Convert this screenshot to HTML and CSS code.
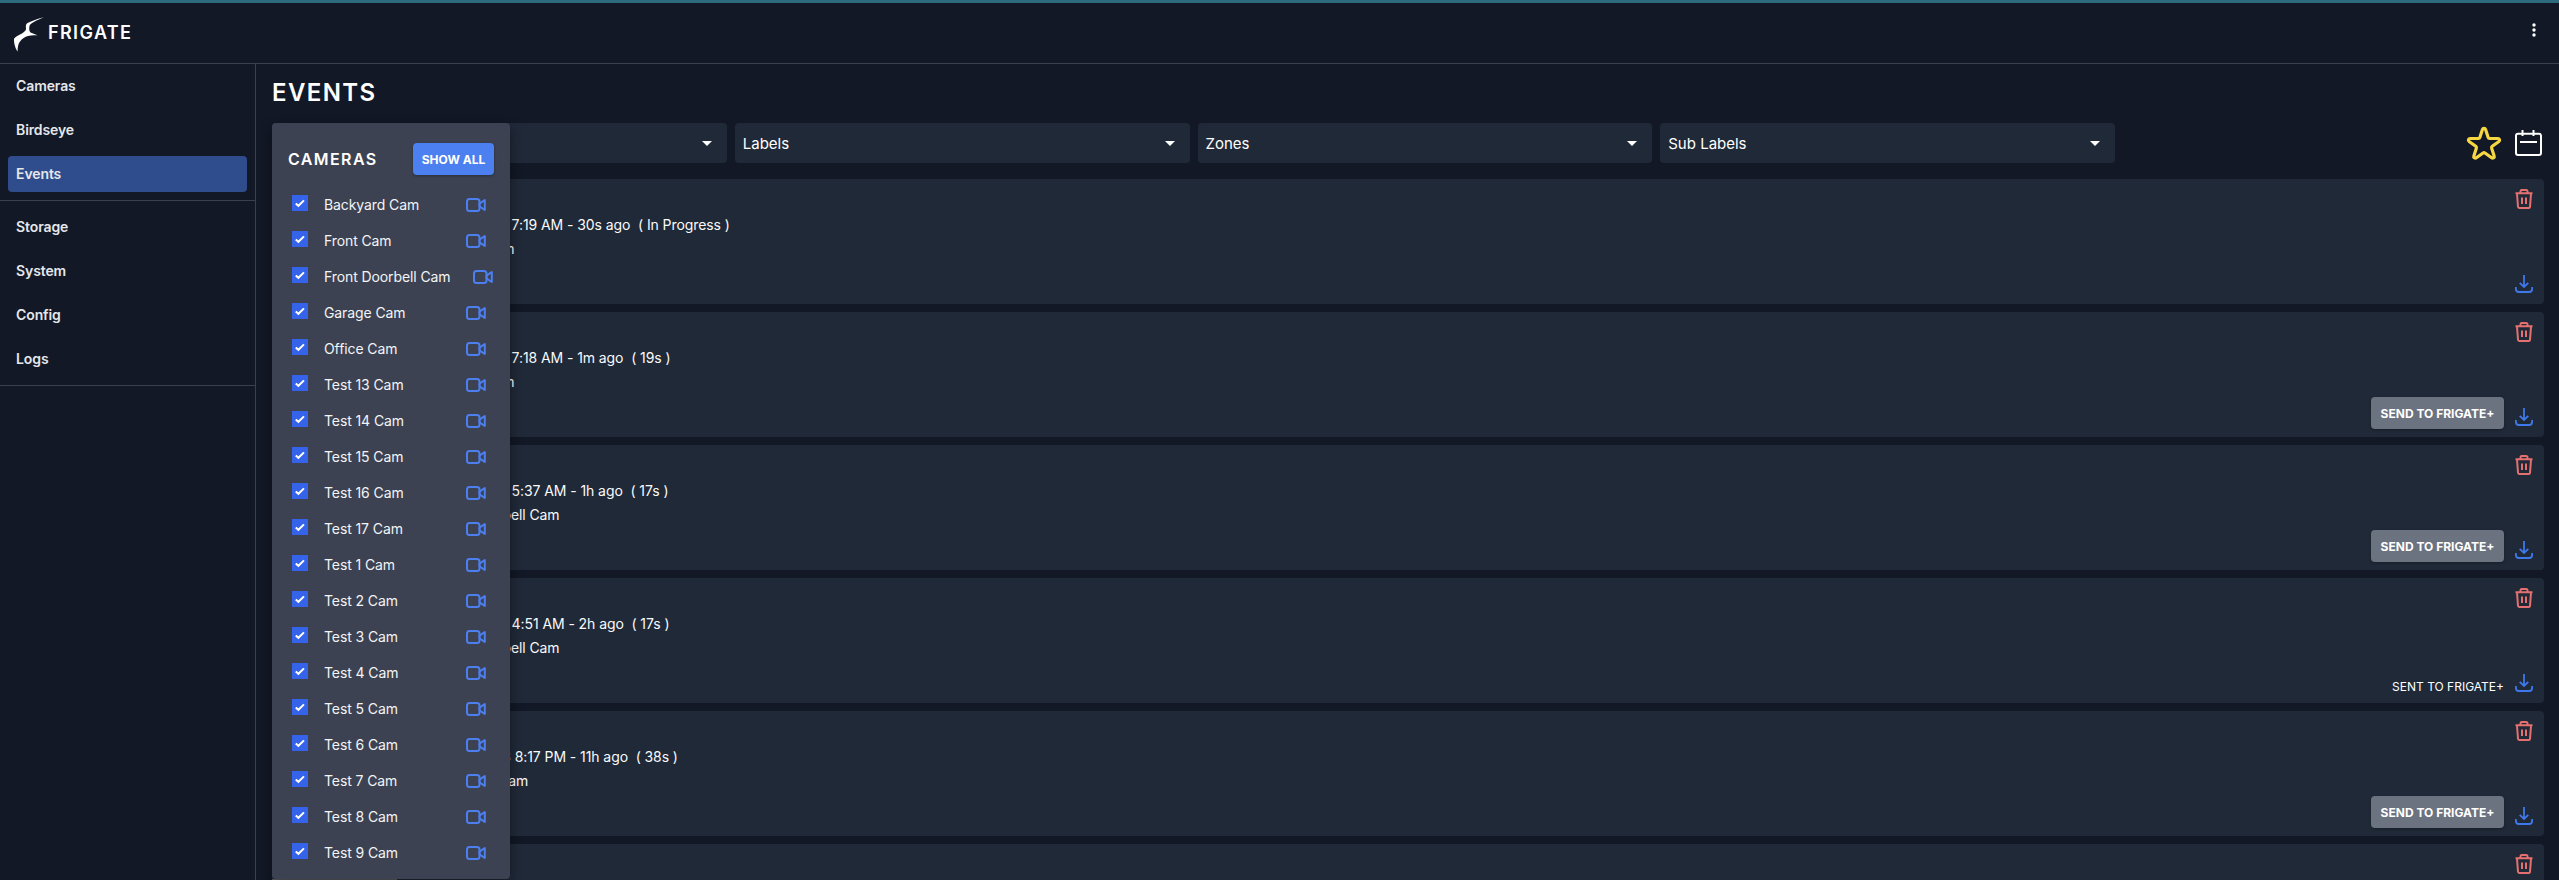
FILE: index.html
```html
<!DOCTYPE html>
<html lang="en">
<head>
<meta charset="utf-8">
<title>Frigate - Events</title>
<link rel="stylesheet" href="styles.css">
</head>
<body>
<svg class="sprite" width="0" height="0" aria-hidden="true">
  <symbol id="i-video" viewBox="0 0 20 14"><rect x="1" y="1" width="12.5" height="12" rx="2.5" fill="none" stroke="currentColor" stroke-width="2"/><path d="M13.5 5.6 18.8 2v10l-5.3-3.6z" fill="none" stroke="currentColor" stroke-width="2" stroke-linejoin="round"/></symbol>
  <symbol id="i-check" viewBox="0 0 16 16"><path d="M3.8 8.4 6.4 10.8 12 5.4" fill="none" stroke="#fff" stroke-width="2"/></symbol>
  <symbol id="i-trash" viewBox="0 0 18 20"><path d="M.5 4.2h17M5.5 4V2.2A1.2 1.2 0 0 1 6.7 1h4.6a1.2 1.2 0 0 1 1.2 1.2V4M2 4.5l1 13.3A1.3 1.3 0 0 0 4.3 19h9.400a1.300 1.300 0 0 0 1.300-1.200l1-13.300M7 8.500v6.500M11 8.500v6.500" fill="none" stroke="currentColor" stroke-width="2"/></symbol>
  <symbol id="i-download" viewBox="0 0 18 18"><path d="M9 0v12M4.700 7.800 9 12l4.300-4.200M.9 12v2a3 3 0 0 0 3 3h10.200a3 3 0 0 0 3-3v-2" fill="none" stroke="currentColor" stroke-width="1.800"/></symbol>
</svg>

<div class="app">
  <header class="topbar">
    <div class="brand">
      <svg class="logo" viewBox="12 13 34 38" aria-hidden="true"><path d="M43.800 15.200C37 17 32 18.600 27.500 21 25.600 22 25.800 24.500 26 26c.3 2-1 3.500-4 5.500-3.500 2-6.500 3-8 5.300-.3 3.200 1 9.200 3.500 12.700.3-4.500.5-7.500 2.500-10 2-3 5-4.500 8-5.500 3-.7 6-1 9.500-.5-2.500-1.500-5.500-2.200-7-3-1.500-1.500-1.500-4.500-1-6.500.5-2.500 6.500-5.500 14.300-8.800z" fill="#fff"/></svg>
      <span class="brand-name">Frigate</span>
    </div>
    <button class="more" aria-label="More">
      <svg viewBox="0 0 6 18" width="6" height="18" aria-hidden="true"><circle cx="3" cy="3" r="1.700" fill="#fff"/><circle cx="3" cy="8" r="1.700" fill="#fff"/><circle cx="3" cy="13" r="1.700" fill="#fff"/></svg>
    </button>
  </header>

  <div class="shell">
    <nav class="sidebar">
      <a class="nav-item">Cameras</a>
      <a class="nav-item">Birdseye</a>
      <a class="nav-item active">Events</a>
      <hr class="nav-sep">
      <a class="nav-item">Storage</a>
      <a class="nav-item">System</a>
      <a class="nav-item">Config</a>
      <a class="nav-item">Logs</a>
      <hr class="nav-sep">
    </nav>

    <main class="main">
      <h1 class="page-title">Events</h1>

      <div class="filters">
        <div class="filter-grid">
          <div class="select"><span>Cameras</span><i class="caret"></i></div>
          <div class="select"><span>Labels</span><i class="caret"></i></div>
          <div class="select"><span>Zones</span><i class="caret"></i></div>
          <div class="select"><span>Sub Labels</span><i class="caret"></i></div>
        </div>
        <div class="filter-icons">
          <svg class="star" viewBox="0 0 24 24" aria-hidden="true"><path d="M11.050 3.900c.3-.9 1.600-.9 1.900 0l1.500 4.700a1 1 0 0 0 .95.7h4.950c1 0 1.400 1.300.6 1.800l-4 2.900a1 1 0 0 0-.36 1.100l1.500 4.700c.3.900-.75 1.700-1.500 1.100l-4-2.900a1 1 0 0 0-1.180 0l-4 2.900c-.75.600-1.800-.2-1.500-1.100l1.500-4.700a1 1 0 0 0-.36-1.100l-4-2.900c-.8-.5-.4-1.800.6-1.800h4.950a1 1 0 0 0 .95-.7z" fill="none" stroke="#f5d742" stroke-width="1.900" stroke-linejoin="round"/></svg>
          <svg class="calendar" viewBox="0 0 27 26" aria-hidden="true"><rect x="1" y="3.800" width="25" height="21.200" rx="2" fill="none" stroke="#fff" stroke-width="2"/><path d="M7.500 0v6M18.500 0v6M5 12h17" fill="none" stroke="#fff" stroke-width="2"/></svg>
        </div>
      </div>

      <div class="events">
        <article class="card">
          <div class="thumb"></div>
          <div class="info">
            <div class="label">Person</div>
            <div class="line time">03/11/2023 7:19 AM - 30s ago &nbsp;( In Progress )</div>
            <div class="line">Garage Cam</div>
          </div>
          <div class="actions">
            <svg class="trash"><use href="#i-trash"/></svg>
            <div class="action-row"><svg class="download"><use href="#i-download"/></svg></div>
          </div>
        </article>
        <article class="card">
          <div class="thumb"></div>
          <div class="info">
            <div class="label">Person</div>
            <div class="line time">03/11/2023 7:18 AM - 1m ago &nbsp;( 19s )</div>
            <div class="line">Garage Cam</div>
          </div>
          <div class="actions">
            <svg class="trash"><use href="#i-trash"/></svg>
            <div class="action-row"><button class="send">Send to Frigate+</button><svg class="download"><use href="#i-download"/></svg></div>
          </div>
        </article>
        <article class="card">
          <div class="thumb"></div>
          <div class="info">
            <div class="label">Person</div>
            <div class="line time">03/11/2023 5:37 AM - 1h ago &nbsp;( 17s )</div>
            <div class="line">Front Doorbell Cam</div>
          </div>
          <div class="actions">
            <svg class="trash"><use href="#i-trash"/></svg>
            <div class="action-row"><button class="send">Send to Frigate+</button><svg class="download"><use href="#i-download"/></svg></div>
          </div>
        </article>
        <article class="card">
          <div class="thumb"></div>
          <div class="info">
            <div class="label">Person</div>
            <div class="line time">03/11/2023 4:51 AM - 2h ago &nbsp;( 17s )</div>
            <div class="line">Front Doorbell Cam</div>
          </div>
          <div class="actions">
            <svg class="trash"><use href="#i-trash"/></svg>
            <div class="action-row"><span class="sent">Sent to Frigate+</span><svg class="download"><use href="#i-download"/></svg></div>
          </div>
        </article>
        <article class="card">
          <div class="thumb"></div>
          <div class="info">
            <div class="label">Person</div>
            <div class="line time">03/10/2023 8:17 PM - 11h ago &nbsp;( 38s )</div>
            <div class="line">Backyard Cam</div>
          </div>
          <div class="actions">
            <svg class="trash"><use href="#i-trash"/></svg>
            <div class="action-row"><button class="send">Send to Frigate+</button><svg class="download"><use href="#i-download"/></svg></div>
          </div>
        </article>
        <article class="card">
          <div class="thumb"></div>
          <div class="info">
            <div class="label">Person</div>
          </div>
          <div class="actions">
            <svg class="trash"><use href="#i-trash"/></svg>
          </div>
        </article>
      </div>

      <section class="popover">
        <div class="popover-head">
          <h2 class="popover-title">Cameras</h2>
          <button class="show-all">Show All</button>
        </div>
        <ul class="cam-list">
          <li class="cam"><span class="check"><svg><use href="#i-check"/></svg></span><span class="cam-name">Backyard Cam</span><svg class="video"><use href="#i-video"/></svg></li>
          <li class="cam"><span class="check"><svg><use href="#i-check"/></svg></span><span class="cam-name">Front Cam</span><svg class="video"><use href="#i-video"/></svg></li>
          <li class="cam"><span class="check"><svg><use href="#i-check"/></svg></span><span class="cam-name">Front Doorbell Cam</span><svg class="video"><use href="#i-video"/></svg></li>
          <li class="cam"><span class="check"><svg><use href="#i-check"/></svg></span><span class="cam-name">Garage Cam</span><svg class="video"><use href="#i-video"/></svg></li>
          <li class="cam"><span class="check"><svg><use href="#i-check"/></svg></span><span class="cam-name">Office Cam</span><svg class="video"><use href="#i-video"/></svg></li>
          <li class="cam"><span class="check"><svg><use href="#i-check"/></svg></span><span class="cam-name">Test 13 Cam</span><svg class="video"><use href="#i-video"/></svg></li>
          <li class="cam"><span class="check"><svg><use href="#i-check"/></svg></span><span class="cam-name">Test 14 Cam</span><svg class="video"><use href="#i-video"/></svg></li>
          <li class="cam"><span class="check"><svg><use href="#i-check"/></svg></span><span class="cam-name">Test 15 Cam</span><svg class="video"><use href="#i-video"/></svg></li>
          <li class="cam"><span class="check"><svg><use href="#i-check"/></svg></span><span class="cam-name">Test 16 Cam</span><svg class="video"><use href="#i-video"/></svg></li>
          <li class="cam"><span class="check"><svg><use href="#i-check"/></svg></span><span class="cam-name">Test 17 Cam</span><svg class="video"><use href="#i-video"/></svg></li>
          <li class="cam"><span class="check"><svg><use href="#i-check"/></svg></span><span class="cam-name">Test 1 Cam</span><svg class="video"><use href="#i-video"/></svg></li>
          <li class="cam"><span class="check"><svg><use href="#i-check"/></svg></span><span class="cam-name">Test 2 Cam</span><svg class="video"><use href="#i-video"/></svg></li>
          <li class="cam"><span class="check"><svg><use href="#i-check"/></svg></span><span class="cam-name">Test 3 Cam</span><svg class="video"><use href="#i-video"/></svg></li>
          <li class="cam"><span class="check"><svg><use href="#i-check"/></svg></span><span class="cam-name">Test 4 Cam</span><svg class="video"><use href="#i-video"/></svg></li>
          <li class="cam"><span class="check"><svg><use href="#i-check"/></svg></span><span class="cam-name">Test 5 Cam</span><svg class="video"><use href="#i-video"/></svg></li>
          <li class="cam"><span class="check"><svg><use href="#i-check"/></svg></span><span class="cam-name">Test 6 Cam</span><svg class="video"><use href="#i-video"/></svg></li>
          <li class="cam"><span class="check"><svg><use href="#i-check"/></svg></span><span class="cam-name">Test 7 Cam</span><svg class="video"><use href="#i-video"/></svg></li>
          <li class="cam"><span class="check"><svg><use href="#i-check"/></svg></span><span class="cam-name">Test 8 Cam</span><svg class="video"><use href="#i-video"/></svg></li>
          <li class="cam"><span class="check"><svg><use href="#i-check"/></svg></span><span class="cam-name">Test 9 Cam</span><svg class="video"><use href="#i-video"/></svg></li>
        </ul>
      </section>
    </main>
  </div>
</div>
</body>
</html>
```
FILE: styles.css
```css
* { box-sizing: border-box; }
html, body { height: 100%; }
body {
  margin: 0;
  height: 880px;
  overflow: hidden;
  background: #121826;
  color: #fff;
  font-family: Inter, "Liberation Sans", sans-serif;
  font-size: 14px;
}
.sprite { position: absolute; }
.app {
  display: flex;
  flex-direction: column;
  height: 880px;
  border-top: 3px solid #2e6a7d;
}
.topbar {
  flex: none;
  height: 61px;
  display: flex;
  align-items: center;
  justify-content: space-between;
  border-bottom: 1px solid #3a404e;
  padding: 0 16px 0 14px;
}
.brand { display: flex; align-items: center; margin-top: -1px; }
.logo { width: 34px; height: 38px; margin: 2px 0 0 -2px; }
.brand-name {
  margin-left: 2px;
  font-size: 18px;
  font-weight: 600;
  letter-spacing: 1.400px;
  text-transform: uppercase;
}
.more {
  width: 16px;
  height: 18px;
  margin: -4px 1px 0 0;
  padding: 0;
  background: none;
  border: 0;
  display: flex;
  justify-content: center;
}
.shell { flex: 1; display: flex; min-height: 0; }
.sidebar {
  flex: none;
  width: 256px;
  padding-top: 4px;
  border-right: 1px solid #3a404e;
}
.nav-item {
  display: flex;
  align-items: center;
  height: 36px;
  margin: 0 8px 8px;
  padding: 0 8px 2px;
  border-radius: 4px;
  font-weight: 600;
  letter-spacing: -0.1px;
  color: #e5e7eb;
}
.nav-item.active { background: #2f4d8c; }
.nav-sep { height: 1px; margin: 0 0 8px; border: 0; background: #3a404e; }
.main { position: relative; flex: 1; min-width: 0; padding: 0 15px 0 16px; }
.page-title {
  margin: 0;
  height: 59px;
  padding-bottom: 2px;
  display: flex;
  align-items: center;
  font-size: 24px;
  font-weight: 600;
  letter-spacing: 1.400px;
  text-transform: uppercase;
}
.filters { display: flex; align-items: flex-start; justify-content: space-between; }
.filter-grid { display: grid; grid-template-columns: repeat(4, 454.750px); gap: 8px; }
.select {
  height: 40px;
  padding: 0 15px 0 8px;
  display: flex;
  align-items: center;
  justify-content: space-between;
  background: #202938;
  border-radius: 4px;
  font-size: 15px;
}
.caret {
  width: 0;
  height: 0;
  border-left: 5px solid transparent;
  border-right: 5px solid transparent;
  border-top: 5px solid #fff;
}
.filter-icons { display: flex; align-items: center; margin-right: 2px; }
.star { width: 40px; height: 40px; margin-right: 11px; }
.calendar { width: 27px; height: 26px; }
.events { display: flex; flex-direction: column; gap: 8px; margin-top: 16px; }
.card {
  flex: none;
  height: 125px;
  display: flex;
  background: #202938;
  border-radius: 4px;
  padding-right: 11px;
}
.thumb { flex: none; width: 125px; height: 70px; margin-top: 35px; background: #5c5f63; }
.info { flex: 1; padding: 10px 0 0 36px; letter-spacing: -0.1px; }
.label { height: 24px; line-height: 24px; font-weight: 600; }
.line { height: 24px; line-height: 24px; color: #f9fafb; }
.line.time { padding-left: 2px; letter-spacing: -0.08px; }
.actions {
  flex: none;
  display: flex;
  flex-direction: column;
  align-items: flex-end;
  justify-content: space-between;
  padding-top: 10px;
  padding-bottom: 8px;
}
.trash { width: 18px; height: 20px; color: #e4716f; }
.action-row { display: flex; align-items: flex-end; }
.download { width: 18px; height: 18px; margin-left: 11px; margin-bottom: 3px; color: #3f78ea; }
.send {
  width: 133px;
  height: 32px;
  padding: 0;
  background: #6b7280;
  color: #fff;
  border: 0;
  border-radius: 4px;
  font: 700 12px Inter, "Liberation Sans", sans-serif;
  letter-spacing: 0;
  text-transform: uppercase;
  box-shadow: 0 1px 3px rgba(0, 0, 0, 0.3);
}
.sent {
  line-height: 16px;
  font-size: 12px;
  letter-spacing: 0;
  text-transform: uppercase;
}
.popover {
  position: absolute;
  left: 16px;
  top: 59px;
  width: 238px;
  height: 756px;
  padding: 20px 16px 8px;
  background: #3c4252;
  border-radius: 4px;
  box-shadow: 0 4px 12px rgba(0, 0, 0, 0.4);
}
.popover-head { display: flex; align-items: center; justify-content: space-between; margin-bottom: 12px; }
.popover-title {
  margin: 0;
  font-size: 16px;
  font-weight: 600;
  letter-spacing: 1.400px;
  text-transform: uppercase;
}
.show-all {
  width: 81px;
  height: 32px;
  padding: 0;
  background: #4c7fef;
  color: #fff;
  border: 0;
  border-radius: 4px;
  font: 700 12px Inter, "Liberation Sans", sans-serif;
  letter-spacing: 0;
  text-transform: uppercase;
  box-shadow: 0 1px 3px rgba(0, 0, 0, 0.3);
}
.cam-list { margin: 0; padding: 0; list-style: none; }
.cam { height: 36px; display: flex; align-items: center; padding-left: 4px; }
.check {
  flex: none;
  width: 16px;
  height: 16px;
  margin: 0 16px 4px 0;
  background: #3563e9;
}
.check svg { display: block; width: 16px; height: 16px; }
.cam-name { flex: none; min-width: 119px; margin-bottom: 2px; letter-spacing: -0.1px; color: #f3f4f6; }
.video { flex: none; width: 20px; height: 14px; margin-left: 23px; color: #4c7fef; }
```
